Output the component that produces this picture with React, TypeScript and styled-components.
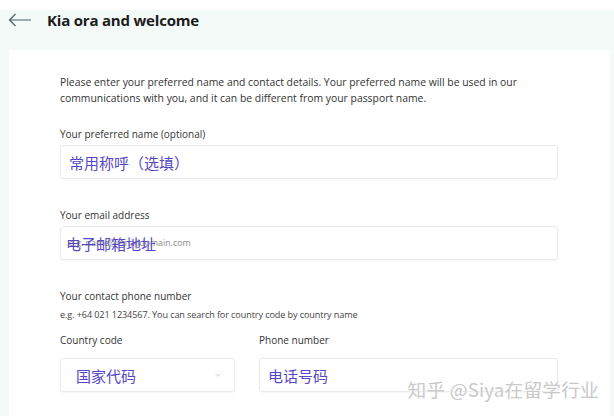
import styled, { createGlobalStyle } from "styled-components";

const GlobalStyle = createGlobalStyle`
    html, body {
        margin: 0;
        padding: 0;
        background: #ffffff;
        font-family: "Open Sans", "Noto Sans", "Noto Sans CJK SC", sans-serif;
        color: #2b2b2b;
    }
`;

const Page = styled.div`
    width: 614px;
    height: 416px;
    overflow: hidden;
    padding-top: 10px;
    box-sizing: border-box;
`;

const Stage = styled.div`
    background: #f3faf8;
    height: 406px;
    padding: 0 4px 0 9px;
    box-sizing: border-box;
    position: relative;
`;

const Header = styled.div`
    display: flex;
    align-items: center;
    height: 20px;
    margin-left: -9px;
    gap: 15px;
`;

const Back = styled.svg`
    width: 24px;
    height: 14px;
    margin-left: 8px;
`;

const Title = styled.h1`
    margin: 0;
    font-size: 15px;
    font-weight: 700;
    color: #1c1c1c;
    letter-spacing: -0.2px;
`;

const Card = styled.div`
    margin-top: 20px;
    background: #fff;
    height: 380px;
    padding: 24px 52px 0 51px;
    box-sizing: border-box;
`;

const Intro = styled.p`
    margin: 0 0 21px;
    max-width: 474px;
    font-size: 10.4px;
    line-height: 16px;
    color: #333;
`;

const Field = styled.div<{ $gap?: number }>`
    margin-bottom: ${(p) => p.$gap ?? 0}px;
`;

const Label = styled.div<{ $space?: number }>`
    font-size: 10px;
    line-height: 14px;
    color: #333;
    margin-bottom: ${(p) => p.$space ?? 4}px;
`;

const Hint = styled.div`
    font-size: 9.1px;
    line-height: 10px;
    color: #444;
    margin: 7px 0 13px;
    letter-spacing: -0.1px;
`;

const Box = styled.div<{ $inset?: number }>`
    position: relative;
    height: 34px;
    border: 1px solid #ebebeb;
    border-radius: 3px;
    box-shadow: 0 1px 2px rgba(0, 0, 0, 0.04);
    box-sizing: border-box;
    display: flex;
    align-items: center;
    padding: 0 8px 0 ${(p) => p.$inset ?? 8}px;
`;

const Value = styled.span`
    font-family: "Noto Sans CJK SC", sans-serif;
    font-size: 15px;
    color: #5548c6;
`;

const Placeholder = styled.span`
    font-size: 8.8px;
    color: #8a8a8a;
`;

const Overlay = styled.span`
    position: absolute;
    left: 5px;
    top: 50%;
    transform: translateY(-48%);
    font-family: "Noto Sans CJK SC", sans-serif;
    font-size: 15px;
    color: #5548c6;
`;

const Row = styled.div`
    display: grid;
    grid-template-columns: 175px 299px;
    column-gap: 24px;
`;

const Chevron = styled.span`
    position: absolute;
    right: 14px;
    top: 13px;
    width: 3px;
    height: 3px;
    border-right: 1px solid #ddd;
    border-bottom: 1px solid #ddd;
    transform: rotate(45deg);
`;

const Watermark = styled.div`
    position: absolute;
    right: 15px;
    bottom: 14px;
    font-family: "Noto Sans CJK SC", sans-serif;
    font-size: 18.7px;
    color: #c9c9c9;
    letter-spacing: 0.2px;
    text-shadow: 0 0 2px #fff, 0 0 2px #fff;
`;

export default function App() {
    return (
        <>
            <GlobalStyle />
            <Page>
                <Stage>
                    <Header>
                        <Back viewBox="0 0 24 14" fill="none" stroke="#4a5e6c" strokeWidth="1.2">
                            <path d="M23 7H1.5M7.5 1L1.5 7l6 6" />
                        </Back>
                        <Title>Kia ora and welcome</Title>
                    </Header>
                    <Card>
                        <Intro>
                            Please enter your preferred name and contact details. Your preferred name will be used in our
                            communications with you, and it can be different from your passport name.
                        </Intro>

                        <Field $gap={29}>
                            <Label>Your preferred name (optional)</Label>
                            <Box>
                                <Value>常用称呼（选填）</Value>
                            </Box>
                        </Field>

                        <Field $gap={29}>
                            <Label>Your email address</Label>
                            <Box>
                                <Placeholder>e.g. name@emaildomain.com</Placeholder>
                                <Overlay>电子邮箱地址</Overlay>
                            </Box>
                        </Field>

                        <Field>
                            <Label $space={0}>Your contact phone number</Label>
                            <Hint>e.g. +64 021 1234567. You can search for country code by country name</Hint>
                            <Row>
                                <div>
                                    <Label $space={11}>Country code</Label>
                                    <Box $inset={15}>
                                        <Value>国家代码</Value>
                                        <Chevron />
                                    </Box>
                                </div>
                                <div>
                                    <Label $space={11}>Phone number</Label>
                                    <Box>
                                        <Value>电话号码</Value>
                                    </Box>
                                </div>
                            </Row>
                        </Field>
                    </Card>
                    <Watermark>知乎 @Siya在留学行业</Watermark>
                </Stage>
            </Page>
        </>
    );
}
